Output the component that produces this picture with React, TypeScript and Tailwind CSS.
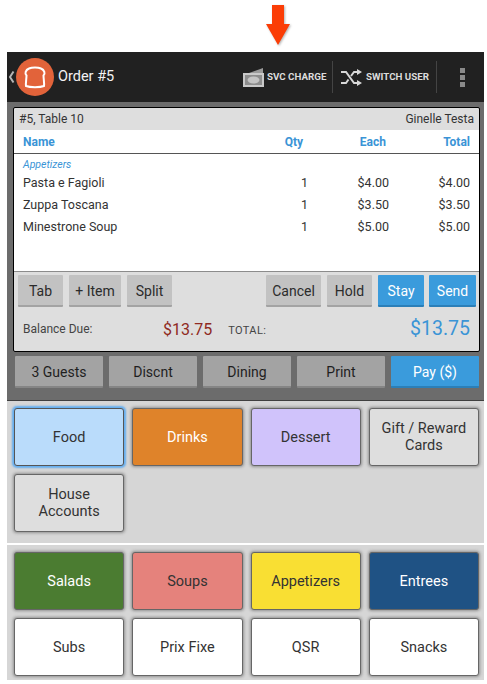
const ITEMS = [
  { name: "Pasta e Fagioli", qty: 1, each: "$4.00", total: "$4.00" },
  { name: "Zuppa Toscana", qty: 1, each: "$3.50", total: "$3.50" },
  { name: "Minestrone Soup", qty: 1, each: "$5.00", total: "$5.00" },
];

const ORDER_BTN = "h-[32px] pt-[2px] rounded-[1px] bg-[#c2c2c2] border-b-2 border-[#a3a3a3] text-[14px] text-[#2b2b2b]";
const ORDER_BTN_BLUE = "h-[32px] pt-[2px] rounded-[1px] bg-[#3a9bdc] border-b-2 border-[#2b7fb8] text-[14px] text-white";
const ACTION_BTN = "w-[88px] h-[32px] pt-[2px] rounded-[1px] bg-[#a3a3a3] border-b-2 border-[#858585] text-[14px] text-[#1f1f1f]";
const TILE = "h-[58px] rounded-[3px] border border-[#666] shadow-[0_0_3px_1px_rgba(60,60,60,0.45)] text-[14.5px] leading-[17px] flex items-center justify-center text-center";

function Tile({ label, className }: { label: string; className: string }) {
  return <button className={`${TILE} ${className}`}>{label}</button>;
}

export default function App() {
  return (
    <div className="w-[487px] h-[684px] bg-white pl-[7px] font-['Roboto',sans-serif] overflow-hidden">
      {/* Arrow callout */}
      <div className="h-[52px] pl-[258px] pt-[5px]">
        <svg width="26" height="42" viewBox="0 0 26 42" className="drop-shadow-[1px_1px_1px_rgba(0,0,0,0.3)]">
          <path d="M7 0H19V19H25L13 40L1 19H7Z" fill="#fb3d06" />
        </svg>
      </div>

      <div className="w-[477px]">
        {/* Header */}
        <div className="h-[50px] bg-[#212121] flex items-center text-white">
          <span className="w-[8px] ml-[1px]">
            <svg width="7" height="14" viewBox="0 0 7 14">
              <path d="M5.5 1.5L2 7L5.5 12.5" fill="none" stroke="#b5b5b5" strokeWidth="2" />
            </svg>
          </span>
          <div className="w-[38px] h-[38px] rounded-full bg-[#e2633a] flex items-center justify-center">
            <svg width="24" height="23" viewBox="0 0 24 23">
              <path
                d="M6 2.5C9 1 15 1 18 2.5C21.5 4 22.5 7.5 20.5 9.5C20.5 13 21.5 17 21 20C17 21.5 7 21.5 3 20C2.5 17 3.5 13 3.5 9.5C1.5 7.5 2.5 4 6 2.5Z"
                fill="none"
                stroke="#fff"
                strokeWidth="2"
              />
            </svg>
          </div>
          <span className="ml-[4px] text-[14.5px] text-[#f2f2f2]">Order #5</span>

          <div className="ml-auto flex items-center h-[32px]">
            <svg width="21" height="19" viewBox="0 0 21 19" className="mr-[3px]">
              <path d="M6 5L20 0V5Z" fill="#9a9a9a" />
              <rect x="0" y="5" width="21" height="14" fill="#c9c9c9" />
              <rect x="2" y="7" width="17" height="10" fill="#8d8d8d" />
              <ellipse cx="10.5" cy="12" rx="6" ry="3.5" fill="#c4c4c4" />
            </svg>
            <span className="text-[9.75px] font-bold text-[#dcdcdc] w-[58px] whitespace-nowrap">SVC CHARGE</span>
            <div className="ml-[7px] w-px h-[32px] bg-[#444]" />
            <svg width="21" height="17" viewBox="0 0 21 17" className="ml-[8px]">
              <path d="M0 3H5L13 14H16M0 14H5L7.5 10.5M10 7L13 3H16" fill="none" stroke="#d8d8d8" strokeWidth="2" />
              <path d="M16 0L21 3L16 6ZM16 11L21 14L16 17Z" fill="#d8d8d8" />
            </svg>
            <span className="ml-[4px] text-[9.75px] font-bold text-[#dcdcdc] w-[63px] whitespace-nowrap">SWITCH USER</span>
            <div className="ml-[7px] w-px h-[32px] bg-[#444]" />
            <div className="ml-[23px] mr-[19px] flex flex-col gap-[2px]">
              <span className="w-[5px] h-[5px] bg-[#8a8a8a]" />
              <span className="w-[5px] h-[5px] bg-[#8a8a8a]" />
              <span className="w-[5px] h-[5px] bg-[#8a8a8a]" />
            </div>
          </div>
        </div>

        {/* Order panel */}
        <div className="h-[299px] bg-[#6c6c6c] pt-[5px] pl-[6px] border-b border-[#3f3f3f]">
          <div className="w-[467px] h-[245px] border border-black rounded-[2px] bg-[#dedede] flex flex-col">
            <div className="h-[22px] shrink-0 px-[5px] flex items-center justify-between text-[12px] text-[#333]">
              <span>#5, Table 10</span>
              <span>Ginelle Testa</span>
            </div>
            <div className="h-[142px] shrink-0 bg-white border-b border-[#8c8c8c]">
              <div className="h-[24px] px-[9px] grid grid-cols-[1fr_60px_83px_84px] items-center border-b border-[#555] text-[12px] font-bold text-[#3a94d6] text-right">
                <span className="text-left">Name</span>
                <span>Qty</span>
                <span>Each</span>
                <span>Total</span>
              </div>
              <div className="pl-[9px] pt-[3px] h-[18px] text-[10.5px] italic leading-[15px] text-[#3a94d6]">Appetizers</div>
              {ITEMS.map((item) => (
                <div
                  key={item.name}
                  className="h-[22px] px-[9px] grid grid-cols-[1fr_60px_81px_81px] items-center text-[12.5px] text-[#333] text-right"
                >
                  <span className="text-left">{item.name}</span>
                  <span>{item.qty}</span>
                  <span>{item.each}</span>
                  <span>{item.total}</span>
                </div>
              ))}
            </div>

            <div className="flex pl-[4px] pr-[3px] pt-[3px]">
              <button className={`${ORDER_BTN} w-[45px]`}>Tab</button>
              <button className={`${ORDER_BTN} w-[52px] ml-[6px]`}>+ Item</button>
              <button className={`${ORDER_BTN} w-[45px] ml-[6px]`}>Split</button>
              <button className={`${ORDER_BTN} w-[55px] ml-auto`}>Cancel</button>
              <button className={`${ORDER_BTN} w-[45px] ml-[6px]`}>Hold</button>
              <button className={`${ORDER_BTN_BLUE} w-[46px] ml-[6px]`}>Stay</button>
              <button className={`${ORDER_BTN_BLUE} w-[47px] ml-[5px]`}>Send</button>
            </div>

            <div className="flex items-center pl-[9px] pr-[9px] mt-[9px] h-[28px]">
              <span className="w-[140px] mb-[3px] text-[12px] text-[#444]">Balance Due:</span>
              <span className="text-[16px] text-[#8f2a22]">$13.75</span>
              <span className="ml-[16px] mt-[3px] text-[11px] text-[#444] tracking-[0.4px]">TOTAL:</span>
              <span className="ml-auto mb-[2px] text-[19.5px] text-[#3a94d6]">$13.75</span>
            </div>
          </div>

          <div className="flex gap-[6px] mt-[4px] pl-[2px]">
            <button className={ACTION_BTN}>3 Guests</button>
            <button className={ACTION_BTN}>Discnt</button>
            <button className={ACTION_BTN}>Dining</button>
            <button className={ACTION_BTN}>Print</button>
            <button className="w-[88px] h-[32px] pt-[2px] rounded-[1px] bg-[#3a9bdc] border-b-2 border-[#2b7fb8] text-[14px] text-white">Pay ($)</button>
          </div>
        </div>

        {/* Top level menu groups */}
        <div className="h-[144px] bg-[#d6d6d6] border-b-2 border-white pt-[7px] pl-[7px] grid grid-cols-[repeat(4,110.25px)] auto-rows-[58px] gap-x-[8px] gap-y-[8px] content-start">
          <button className={`${TILE} bg-[#badcfb] text-[#333] !border-[#555] !shadow-[0_0_2px_2px_#64aef0]`}>Food</button>
          <Tile label="Drinks" className="bg-[#df832a] text-white" />
          <Tile label="Dessert" className="bg-[#d0c3fb] text-[#333]" />
          <Tile label="Gift / Reward Cards" className="bg-[#dedede] text-[#333] px-[10px]" />
          <Tile label="House Accounts" className="bg-[#dedede] text-[#333] px-[20px]" />
        </div>

        {/* Sub groups */}
        <div className="h-[135px] bg-[#d6d6d6] pt-[7px] pl-[7px] grid grid-cols-[repeat(4,110.25px)] auto-rows-[58px] gap-x-[8px] gap-y-[8px] content-start">
          <Tile label="Salads" className="bg-[#4b7c31] text-white" />
          <Tile label="Soups" className="bg-[#e5827c] text-[#333]" />
          <Tile label="Appetizers" className="bg-[#f9df33] text-[#333]" />
          <Tile label="Entrees" className="bg-[#1f5284] text-white" />
          <Tile label="Subs" className="bg-white text-[#333]" />
          <Tile label="Prix Fixe" className="bg-white text-[#333]" />
          <Tile label="QSR" className="bg-white text-[#333]" />
          <Tile label="Snacks" className="bg-white text-[#333]" />
        </div>
      </div>
    </div>
  );
}
